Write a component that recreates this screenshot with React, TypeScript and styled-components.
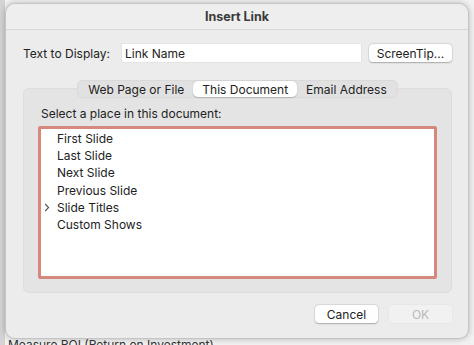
import { FC, useState } from "react";
import styled, { createGlobalStyle } from "styled-components";

const GlobalStyle = createGlobalStyle`
    html, body {
        margin: 0;
        padding: 0;
    }
    body {
        font-family: "Inter", "Liberation Sans", Arial, sans-serif;
        -webkit-font-smoothing: antialiased;
    }
`;

const Backdrop = styled.div`
    width: 474px;
    height: 345px;
    box-sizing: border-box;
    padding: 3px 0 0 5px;
    background: linear-gradient(to right, #d4d4d4 0, #d4d4d4 5px, #f2f2f2 5px);
    overflow: hidden;
    position: relative;
`;

const BehindText = styled.div`
    position: absolute;
    left: 8px;
    bottom: -7px;
    font-size: 12px;
    line-height: 14px;
    color: #333;
`;

const Dialog = styled.div`
    width: 464px;
    height: 336px;
    box-sizing: border-box;
    background: #ececec;
    border-radius: 10px;
    border: 1px solid #c4c4c4;
    box-shadow: 0 0 6px rgba(0, 0, 0, 0.25);
    display: flex;
    flex-direction: column;
    position: relative;
    z-index: 1;
`;

const TitleBar = styled.div`
    height: 25px;
    flex-shrink: 0;
    display: flex;
    align-items: center;
    justify-content: center;
    border-bottom: 1px solid #d7d7d7;
    background: #eeeeee;
    border-radius: 10px 10px 0 0;
    font-size: 12.5px;
    font-weight: 700;
    color: #3a3a3a;
`;

const Body = styled.div`
    flex: 1;
    display: flex;
    flex-direction: column;
    padding: 14px 16px 0 17px;
`;

const FieldRow = styled.div`
    display: flex;
    align-items: center;
    height: 18px;
`;

const Label = styled.span`
    width: 99px;
    font-size: 12px;
    color: #222;
`;

const TextInput = styled.input`
    width: 239px;
    height: 18px;
    box-sizing: border-box;
    border: none;
    background: #fff;
    padding: 0 3px;
    font: inherit;
    font-size: 12px;
    color: #222;
    outline: none;
    box-shadow: 0 0 0 0.5px #dcdcdc;
`;

const PushButton = styled.button<{ $disabled?: boolean }>`
    width: 63px;
    height: 18px;
    box-sizing: border-box;
    border: none;
    border-radius: 4px;
    background: ${({ $disabled }) => ($disabled ? "#f1f1f1" : "#fefefe")};
    box-shadow: ${({ $disabled }) =>
        $disabled ? "0 0 0 0.5px #e2e2e2" : "0 0.5px 1.5px rgba(0,0,0,0.25), 0 0 0 0.5px #d8d8d8"};
    font-family: inherit;
    font-size: 12px;
    color: ${({ $disabled }) => ($disabled ? "#b9b9b9" : "#222")};
    padding: 0;
    cursor: default;
`;

const TipButton = styled(PushButton)`
    width: 83px;
    margin-left: 8px;
`;

const TabsWrap = styled.div`
    display: flex;
    justify-content: center;
    margin-top: 18px;
    position: relative;
    z-index: 2;
`;

const Tabs = styled.div`
    display: flex;
    align-items: center;
    height: 18px;
    padding: 0 2px;
    border-radius: 6px;
    background: #e1e1e1;
    box-shadow: inset 0 0 0 0.5px #d3d3d3;
`;

const Tab = styled.div<{ $active?: boolean }>`
    height: 16px;
    display: flex;
    align-items: center;
    padding: 0 9px;
    border-radius: 5px;
    font-size: 12px;
    color: #222;
    background: ${({ $active }) => ($active ? "#fff" : "transparent")};
    box-shadow: ${({ $active }) => ($active ? "0 0.5px 1.5px rgba(0,0,0,0.2)" : "none")};
`;

const GroupBox = styled.div`
    margin-top: -10px;
    height: 205px;
    box-sizing: border-box;
    background: #e4e4e4;
    border-radius: 6px;
    border: 1px solid #dddddd;
    padding: 17px 14px 13px 14px;
    display: flex;
    flex-direction: column;
`;

const GroupLabel = styled.div`
    font-size: 12px;
    color: #222;
    line-height: 16px;
    margin-left: 3px;
`;

const ListBox = styled.div`
    margin-top: 4px;
    flex: 1;
    background: #fff;
    border: 3px solid #d6887d;
    border-radius: 2px;
    padding: 1px 0 0 0;
    display: flex;
    flex-direction: column;
`;

const ListItem = styled.div`
    display: flex;
    align-items: center;
    height: 17.2px;
    font-size: 12px;
    color: #222;
    padding-left: 3px;
`;

const Disclosure = styled.span`
    width: 13px;
    display: flex;
    align-items: center;
    justify-content: flex-start;
`;

const Footer = styled.div`
    display: flex;
    justify-content: flex-end;
    gap: 11px;
    margin-top: 12px;
`;

const places: { name: string; expandable?: boolean }[] = [
    { name: "First Slide" },
    { name: "Last Slide" },
    { name: "Next Slide" },
    { name: "Previous Slide" },
    { name: "Slide Titles", expandable: true },
    { name: "Custom Shows" },
];

const Chevron: FC = () => (
    <svg width="6" height="9" viewBox="0 0 6 9">
        <path d="M1.2 1 L4.6 4.5 L1.2 8" fill="none" stroke="#555" strokeWidth="1.1" />
    </svg>
);

const App: FC = () => {
    const [tab] = useState("This Document");
    const tabs = ["Web Page or File", "This Document", "Email Address"];

    return (
        <>
            <GlobalStyle />
            <Backdrop>
                <BehindText>Measure ROI (Return on Investment)</BehindText>
                <Dialog>
                    <TitleBar>Insert Link</TitleBar>
                    <Body>
                        <FieldRow>
                            <Label>Text to Display:</Label>
                            <TextInput defaultValue="Link Name" />
                            <TipButton>ScreenTip...</TipButton>
                        </FieldRow>
                        <TabsWrap>
                            <Tabs>
                                {tabs.map((t) => (
                                    <Tab key={t} $active={t === tab}>
                                        {t}
                                    </Tab>
                                ))}
                            </Tabs>
                        </TabsWrap>
                        <GroupBox>
                            <GroupLabel>Select a place in this document:</GroupLabel>
                            <ListBox>
                                {places.map((p) => (
                                    <ListItem key={p.name}>
                                        <Disclosure>{p.expandable && <Chevron />}</Disclosure>
                                        {p.name}
                                    </ListItem>
                                ))}
                            </ListBox>
                        </GroupBox>
                        <Footer>
                            <PushButton>Cancel</PushButton>
                            <PushButton $disabled>OK</PushButton>
                        </Footer>
                    </Body>
                </Dialog>
            </Backdrop>
        </>
    );
};

export default App;
